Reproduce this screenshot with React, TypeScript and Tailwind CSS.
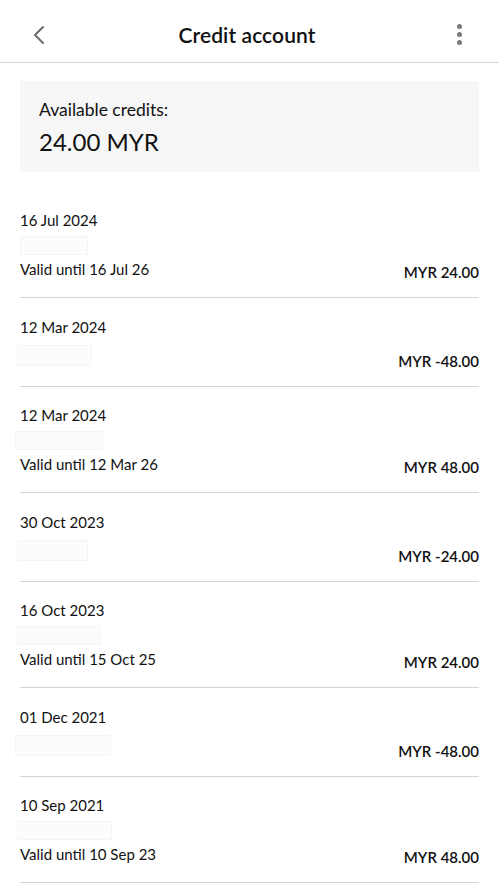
import { ChevronLeft } from 'lucide-react';

interface CreditRow {
  date: string;
  amount: string;
  validUntil?: string;
  maskWidth: number;
  maskOffset: number;
}

const rows: CreditRow[] = [
  { date: '16 Jul 2024', amount: 'MYR 24.00', validUntil: 'Valid until 16 Jul 26', maskWidth: 68, maskOffset: 0 },
  { date: '12 Mar 2024', amount: 'MYR -48.00', maskWidth: 75, maskOffset: -3 },
  { date: '12 Mar 2024', amount: 'MYR 48.00', validUntil: 'Valid until 12 Mar 26', maskWidth: 88, maskOffset: -5 },
  { date: '30 Oct 2023', amount: 'MYR -24.00', maskWidth: 71, maskOffset: -3 },
  { date: '16 Oct 2023', amount: 'MYR 24.00', validUntil: 'Valid until 15 Oct 25', maskWidth: 84, maskOffset: -3 },
  { date: '01 Dec 2021', amount: 'MYR -48.00', maskWidth: 96, maskOffset: -5 },
  { date: '10 Sep 2021', amount: 'MYR 48.00', validUntil: 'Valid until 10 Sep 23', maskWidth: 95, maskOffset: -3 },
];

function Mask({ width, offset, height }: { width: number; offset: number; height: number }) {
  return (
    <div
      className="rounded-[2px] border border-[#f4f4f4] bg-[#fcfcfc]"
      style={{ width, marginLeft: offset, height }}
    />
  );
}

export default function App() {
  return (
    <div className="min-h-screen bg-white text-[#111] font-['Lato',sans-serif]">
      <header className="flex h-[63px] items-center justify-between border-b border-[#d6d6d6] pl-[23px] pr-[30px] pt-[7px]">
        <ChevronLeft size={32} strokeWidth={1.5} className="text-[#6b6b6b]" />
        <h1 className="text-[21px] font-semibold tracking-[0.1px] text-[#111]">Credit account</h1>
        <div className="flex w-[30px] flex-col items-end gap-[3px] pr-[7px]">
          <span className="h-[5px] w-[5px] rounded-full bg-[#7a7a7a]" />
          <span className="h-[5px] w-[5px] rounded-full bg-[#7a7a7a]" />
          <span className="h-[5px] w-[5px] rounded-full bg-[#7a7a7a]" />
        </div>
      </header>

      <div className="mx-5 mt-[18px] h-[91px] bg-[#f7f7f7] pl-[19px] pt-[18px]">
        <p className="text-[17.5px] leading-[22px]">Available credits:</p>
        <p className="mt-[6px] text-[24px] leading-[30px]">24.00 MYR</p>
      </div>

      <div className="mt-[20px]">
        {rows.map((row, index) =>
          row.validUntil ? (
            <div key={index} className="mx-5 border-b border-[#d4d4d4] pb-[15px] pt-[18px]">
              <p className="text-[15px] leading-5">{row.date}</p>
              <div className="mt-[6px]">
                <Mask width={row.maskWidth} offset={row.maskOffset} height={19} />
              </div>
              <div className="mt-[4px] flex items-start justify-between">
                <p className="text-[15px] leading-5">{row.validUntil}</p>
                <p className="mt-[3px] text-[15px] font-semibold leading-5">{row.amount}</p>
              </div>
            </div>
          ) : (
            <div key={index} className="mx-5 border-b border-[#d4d4d4] pb-[15px] pt-[19px]">
              <p className="text-[15px] leading-5">{row.date}</p>
              <div className="mt-[8px] flex items-start justify-between">
                <Mask width={row.maskWidth} offset={row.maskOffset} height={21} />
                <p className="mt-[6px] text-[15px] font-semibold leading-5">{row.amount}</p>
              </div>
            </div>
          )
        )}
      </div>
    </div>
  );
}
